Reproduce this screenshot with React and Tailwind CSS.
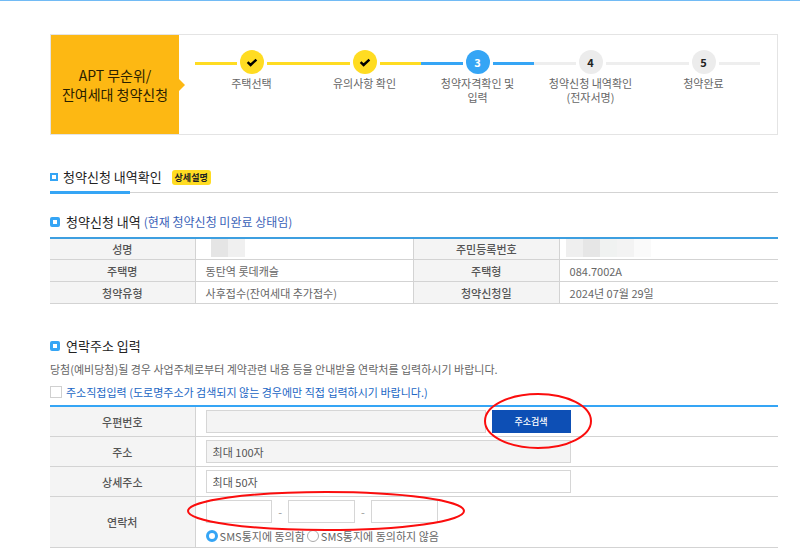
import React, { useState } from 'react';
import clsx from 'clsx';

const steps = [
  { id: 1, label: ['주택선택'], status: 'done' },
  { id: 2, label: ['유의사항 확인'], status: 'done' },
  { id: 3, label: ['청약자격확인 및', '입력'], status: 'active' },
  { id: 4, label: ['청약신청 내역확인', '(전자서명)'], status: 'todo' },
  { id: 5, label: ['청약완료'], status: 'todo' },
];

const stepColor = {
  done: 'bg-[#ffdc22] text-black',
  active: 'bg-[#35a5f5] text-white',
  todo: 'bg-[#ececec] text-[#222]',
};

const lineColor = {
  done: 'bg-[#ffdc22]',
  active: 'bg-[#35a5f5]',
  todo: 'bg-[#eeeeee]',
};

const CheckMark = () => (
  <svg viewBox="0 0 12 9" className="w-3 h-[9px]" fill="none" stroke="currentColor" strokeWidth="2.4">
    <path d="M1.6 4.2 L4.6 7 L10.4 1.6" />
  </svg>
);

const Step = ({ step }) => (
  <li className="flex-1 min-w-0 text-center">
    <div className="flex items-center">
      <span className={clsx('flex-1 h-[3px] mt-[3px]', lineColor[step.status])} />
      <span
        className={clsx(
          'w-6 h-6 mx-[3px] rounded-full flex items-center justify-center text-[11px] font-bold',
          stepColor[step.status]
        )}
      >
        {step.status === 'done' ? <CheckMark /> : step.id}
      </span>
      <span className={clsx('flex-1 h-[3px] mt-[3px]', lineColor[step.status])} />
    </div>
    <p className="mt-[2px] text-[11px] leading-[14px] text-[#666] whitespace-nowrap">
      {step.label.map(line => (
        <span key={line} className="block">{line}</span>
      ))}
    </p>
  </li>
);

const StepHeader = () => (
  <header className="flex h-[101px] border border-[#e4e4e4]">
    <h1 className="relative w-32 shrink-0 bg-[#fdb813] flex items-center justify-center text-center text-sm leading-[19px] text-[#2a2000]">
      <span>
        APT 무순위/
        <br />
        잔여세대 청약신청
      </span>
      <span className="absolute left-full top-1/2 -translate-y-1/2 border-y-[6px] border-l-[6px] border-y-transparent border-l-[#fdb813]" />
    </h1>
    <ol className="flex flex-1 pl-4 pr-[17px] pt-[15px]">
      {steps.map(step => (
        <Step key={step.id} step={step} />
      ))}
    </ol>
  </header>
);

const SubHeading = ({ children, note }) => (
  <h3 className="flex items-center text-[13px] leading-5 text-[#222]">
    <span className="w-[10px] h-[10px] mr-[6px] border-[3px] border-[#35a5f5] rounded-[2px]" />
    {children}
    {note && <span className="ml-[3px] text-xs leading-5 text-[#3a62b8]">{note}</span>}
  </h3>
);

// Blurred out personal data
const Mosaic = ({ blocks }) => (
  <div className="flex h-[18px]">
    {blocks.map((color, i) => (
      <span key={i} className={clsx('w-[17px]', color)} />
    ))}
  </div>
);

const Circle = ({ className, ...size }) => (
  <svg
    viewBox={`0 0 ${size.width} ${size.height}`}
    width={size.width}
    height={size.height}
    className={clsx('absolute max-w-none pointer-events-none', className)}
    fill="none"
    stroke="#fb0d0d"
    strokeWidth="2"
    aria-hidden="true"
  >
    <ellipse
      cx={size.width / 2}
      cy={size.height / 2}
      rx={size.width / 2 - 1}
      ry={size.height / 2 - 1}
    />
  </svg>
);

const th = 'bg-[#f4f4f4] border-r border-b border-[#d3d3d3] font-medium text-center text-[#555]';
const td = 'border-b border-[#d3d3d3]';
const field = 'h-[23px] border border-[#d6d6d6] px-[6px] text-[11px] text-[#555] placeholder:text-[#555] outline-none';
const radio =
  'appearance-none w-3 h-3 rounded-full border border-[#aaa] bg-white checked:border-[3px] checked:border-[#35a5f5]';

const SummaryTable = () => (
  <table className="w-full table-fixed border-separate border-spacing-0 border-t-2 border-[#3d9fe0] text-[11px] leading-5 text-[#666]">
    <colgroup>
      <col className="w-1/5" />
      <col className="w-[30%]" />
      <col className="w-1/5" />
      <col className="w-[30%]" />
    </colgroup>
    <tbody>
      <tr className="h-[21px]">
        <th scope="row" className={th}>성명</th>
        <td className={clsx(td, 'border-r pl-[15px] align-top')}>
          <Mosaic blocks={['bg-[#e5e5e5]', 'bg-[#f0f0f0]']} />
        </td>
        <th scope="row" className={th}>주민등록번호</th>
        <td className={clsx(td, 'pl-[6px] align-top')}>
          <Mosaic blocks={['bg-[#efefef]', 'bg-[#e6e6e6]', 'bg-[#f0f2f1]', 'bg-[#f3f3f3]', 'bg-[#fafafa]']} />
        </td>
      </tr>
      <tr className="h-[22px]">
        <th scope="row" className={th}>주택명</th>
        <td className={clsx(td, 'border-r pl-[10px]')}>동탄역 롯데캐슬</td>
        <th scope="row" className={th}>주택형</th>
        <td className={clsx(td, 'pl-[10px]')}>084.7002A</td>
      </tr>
      <tr className="h-[22px]">
        <th scope="row" className={th}>청약유형</th>
        <td className={clsx(td, 'border-r pl-[10px]')}>사후접수(잔여세대 추가접수)</td>
        <th scope="row" className={th}>청약신청일</th>
        <td className={clsx(td, 'pl-[10px]')}>2024년 07월 29일</td>
      </tr>
    </tbody>
  </table>
);

const ContactForm = () => {
  const [sms, setSms] = useState('agree');

  return (
    <table className="w-full table-fixed border-separate border-spacing-0 border-t-2 border-[#35a5f5] text-[11px] leading-4 text-[#666]">
      <colgroup>
        <col className="w-1/5" />
        <col className="w-4/5" />
      </colgroup>
      <tbody>
        <tr className="h-[30px]">
          <th scope="row" className={th}><label htmlFor="zip">우편번호</label></th>
          <td className={clsx(td, 'px-[10px]')}>
            <div className="flex gap-[6px] w-full max-w-[365px]">
              <input id="zip" readOnly className={clsx(field, 'flex-1 min-w-0 bg-[#f4f4f4]')} />
              <div className="relative w-[79px]">
                <button type="button" className="w-full h-[23px] bg-[#0d4fb5] text-white text-[9px] font-medium">
                  주소검색
                </button>
                <Circle width={108} height={56} className="-left-2 top-[-17px]" />
              </div>
            </div>
          </td>
        </tr>
        <tr className="h-[30px]">
          <th scope="row" className={th}><label htmlFor="addr">주소</label></th>
          <td className={clsx(td, 'px-[10px]')}>
            <input id="addr" readOnly placeholder="최대 100자" className={clsx(field, 'block w-full max-w-[365px] bg-[#f4f4f4]')} />
          </td>
        </tr>
        <tr className="h-[30px]">
          <th scope="row" className={th}><label htmlFor="addr-detail">상세주소</label></th>
          <td className={clsx(td, 'px-[10px]')}>
            <input id="addr-detail" placeholder="최대 50자" className={clsx(field, 'block w-full max-w-[365px]')} />
          </td>
        </tr>
        <tr className="h-[51px]">
          <th scope="row" className={th}>연락처</th>
          <td className={clsx(td, 'px-[10px]')}>
            <div className="relative flex items-center w-[232px]">
              <input aria-label="연락처 앞자리" className={clsx(field, 'flex-1 min-w-0')} />
              <span className="w-4 text-center text-[#999]">-</span>
              <input aria-label="연락처 중간자리" className={clsx(field, 'flex-1 min-w-0')} />
              <span className="w-4 text-center text-[#999]">-</span>
              <input aria-label="연락처 끝자리" className={clsx(field, 'flex-1 min-w-0')} />
              <Circle width={278} height={40} className="left-[-19px] top-[-9px]" />
            </div>
            <div className="flex gap-[2px] mt-[5px]">
              <label className="flex items-center gap-[2px]">
                <input type="radio" name="sms" className={radio} checked={sms === 'agree'} onChange={() => setSms('agree')} />
                SMS통지에 동의함
              </label>
              <label className="flex items-center gap-[2px]">
                <input type="radio" name="sms" className={radio} checked={sms === 'deny'} onChange={() => setSms('deny')} />
                SMS통지에 동의하지 않음
              </label>
            </div>
          </td>
        </tr>
      </tbody>
    </table>
  );
};

const App = () => (
  <div className="bg-white border-t border-[#72bbf5] font-['Noto_Sans_CJK_KR',sans-serif]">
    <main className="pl-[50px] pr-[22px] pt-[33px] pb-3">
      <StepHeader />

      <section className="mt-8">
        <div className="relative flex items-center h-[26px] pb-[5px] border-b border-[#d3d3d3]">
          <span className="w-2 h-2 mr-[5px] border-2 border-[#35a5f5]" />
          <h2 className="text-[13px] leading-5 text-[#222]">청약신청 내역확인</h2>
          <button type="button" className="ml-[10px] h-[15px] px-[3px] rounded-[3px] bg-[#ffdc22] text-[9px] leading-[15px] font-bold text-[#222]">
            상세설명
          </button>
          <span className="absolute left-0 -bottom-[2px] w-20 h-[3px] bg-[#35a5f5]" />
        </div>
      </section>

      <section className="mt-[19px]">
        <SubHeading note="(현재 청약신청 미완료 상태임)">청약신청 내역</SubHeading>
        <div className="mt-[5px]">
          <SummaryTable />
        </div>
      </section>

      <section className="mt-8">
        <SubHeading>연락주소 입력</SubHeading>
        <p className="mt-[3px] text-[11px] leading-5 text-[#666]">
          당첨(예비당첨)될 경우 사업주체로부터 계약관련 내용 등을 안내받을 연락처를 입력하시기 바랍니다.
        </p>
        <label className="flex items-center gap-1 mt-[3px] mb-[3px] text-[11px] leading-5 text-[#2166c4]">
          <input type="checkbox" className="appearance-none w-3 h-3 border border-[#d0d0d0] bg-white checked:bg-[#35a5f5]" />
          주소직접입력 (도로명주소가 검색되지 않는 경우에만 직접 입력하시기 바랍니다.)
        </label>
        <ContactForm />
      </section>
    </main>
  </div>
);

export default App;
